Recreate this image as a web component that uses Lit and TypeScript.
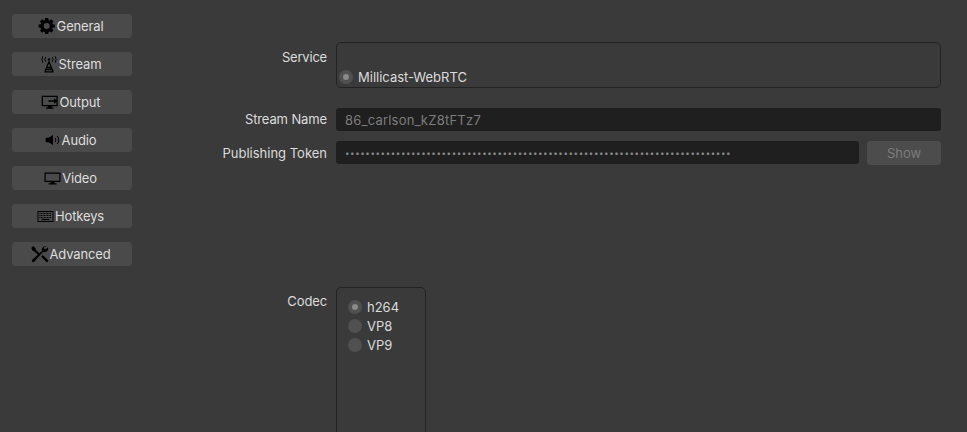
import { LitElement, html, css, svg } from "lit";
import { customElement } from "lit/decorators.js";

function gearPath(): string {
  const cx = 8.7, cy = 9, pts: string[] = [];
  const n = 8;
  for (let i = 0; i < n; i++) {
    const a = (i / n) * Math.PI * 2 - Math.PI / 2;
    const w = 0.24, r1 = 8.2, r0 = 6.3;
    const p = (r: number, t: number) =>
      `${(cx + r * Math.cos(t)).toFixed(2)} ${(cy + r * Math.sin(t)).toFixed(2)}`;
    pts.push(p(r0, a - w - 0.06), p(r1, a - w + 0.05), p(r1, a + w - 0.05), p(r0, a + w + 0.06));
  }
  return `M${pts.join("L")}Z M${cx - 3} ${cy}a3 3 0 1 0 6 0a3 3 0 1 0-6 0Z`;
}

const icons: Record<string, any> = {
  gear: svg`<svg class="ic" width="18" height="18" viewBox="0 0 18 18"><path fill="#000" fill-rule="evenodd" d="${gearPath()}"/></svg>`,
  antenna: svg`<svg class="ic" width="18" height="18" viewBox="0 0 18 18" fill="none" stroke="#000"><circle cx="9" cy="4.500" r="1.200" fill="#000" stroke="none"/><path stroke-width="1" d="M5.700 2.200a4 4 0 0 0 0 4.600M12.300 2.200a4 4 0 0 1 0 4.600M2.800 1.300a6.500 6.500 0 0 0 0 6.400M15.200 1.300a6.500 6.500 0 0 1 0 6.400"/><path stroke-width="1.300" d="M9 6.500 5 16.600M9 6.500l4 10.100M6.800 12.500h4.400M6 14.500h6M4.400 16.800h9.200"/></svg>`,
  output: svg`<svg class="ic" width="18" height="18" viewBox="0 0 18 18"><path fill="#000" fill-rule="evenodd" d="M.7 2.800h16v10.500H10.700v1.200h1.800v1.200H5v-1.200h1.800v-1.200H.7zM2 4.100v8h13.400v-8z"/><path fill="#000" d="M7.500 7.300h5.500V5.200l3.700 2.800-3.700 2.800V8.700H7.500z"/></svg>`,
  audio: svg`<svg class="ic" width="16" height="16" viewBox="0 0 16 16"><path fill="#000" d="M.7 5.800h2.800L8 3v10L3.500 10.200H.7z"/><path fill="none" stroke="#000" stroke-width="1" d="M10 5.800a3.400 3.400 0 0 1 0 4.400M12.200 4a6 6 0 0 1 0 8"/></svg>`,
  video: svg`<svg class="ic" width="17" height="17" viewBox="0 0 17 17"><path fill="#000" fill-rule="evenodd" d="M.5 2.500h16v9.500H10.500v1.300h2v1.200h-8v-1.200h2V12H.5zm1.200 1.200v7.100h13.600V3.700z"/></svg>`,
  keys: svg`<svg class="ic" width="17" height="17" viewBox="0 0 17 17"><path fill="#000" fill-rule="evenodd" d="M.5 3h16v11H.5zm1 1v9h14V4z"/><path stroke="#000" stroke-width="1.100" stroke-dasharray="1 .5" fill="none" d="M2.500 5.500h12M2.500 7.500h12M2.500 9.500h12"/><path stroke="#000" stroke-width="1.200" d="M4.500 11.500h8"/></svg>`,
  tools: svg`<svg class="ic" width="18" height="18" viewBox="0 0 18 18"><path fill="#000" d="M2.300 1 4.500 3.200 5 5 8.300 8.300 6.800 9.800 3.500 6.500 1.800 6 0.300 3zM15.800 1.200a3.800 3.800 0 0 0-4.800 4.900L1.200 14.700a1.500 1.500 0 0 0 2.100 2.100L11.900 7a3.800 3.800 0 0 0 5-4.800L14.900 4.200l-1.700-.4-.4-1.700z"/><path fill="#000" d="M10.200 11.700l1.700-1.700 5 5a1.200 1.200 0 0 1-1.700 1.700z"/></svg>`,
};

const NAV = [
  ["gear", "General"],
  ["antenna", "Stream"],
  ["output", "Output"],
  ["audio", "Audio"],
  ["video", "Video"],
  ["keys", "Hotkeys"],
  ["tools", "Advanced"],
];

@customElement("app-root")
export class AppRoot extends LitElement {
  static styles = css`
    :host {
      display: flex;
      height: 432px;
      overflow: hidden;
      background: #3a3a3a;
      color: #dcdcdc;
      font-family: Inter, "Liberation Sans", sans-serif;
      font-size: 13px;
    }
    .side {
      width: 120px;
      padding: 14px 0 0 12px;
      display: flex;
      flex-direction: column;
      gap: 14px;
      flex: none;
    }
    .nav {
      height: 24px;
      border-radius: 3px;
      background: #4a4a4a;
      display: flex;
      align-items: center;
      justify-content: center;
      gap: 1px;
      padding-right: 3px;
      box-sizing: border-box;
      color: #dedede;
      letter-spacing: -0.15px;
    }
    .ic { flex: none; }
    .main {
      flex: none;
      width: 809px;
      padding-top: 42px;
      display: grid;
      grid-template-columns: 195px 1fr;
      column-gap: 9px;
      align-content: start;
    }
    .lab {
      text-align: right;
      line-height: 15px;
      padding-top: 4px;
      color: #dcdcdc;
      letter-spacing: -0.12px;
    }
    .lab.l-service { padding-top: 8px; letter-spacing: -0.2px; }
    .lab.l-token { padding-top: 5px; letter-spacing: 0; }
    .lab.l-codec { padding-top: 7px; }
    .box {
      border: 1px solid #232323;
      border-radius: 5px;
      box-sizing: border-box;
    }
    .service {
      height: 46px;
      display: flex;
      align-items: flex-end;
      padding: 0 0 1px 2px;
      margin-bottom: 20px;
    }
    .radio {
      display: flex;
      align-items: center;
      gap: 5px;
      height: 19px;
    }
    .dot {
      width: 14px;
      height: 14px;
      border-radius: 50%;
      background: #505050;
      display: flex;
      align-items: center;
      justify-content: center;
    }
    .dot.on::after {
      content: "";
      width: 6px;
      height: 6px;
      border-radius: 50%;
      background: #8a8a8a;
    }
    .input {
      height: 23px;
      background: #1f1f1f;
      border-radius: 3px;
      display: flex;
      align-items: center;
      padding-left: 9px;
      box-sizing: border-box;
      color: #7d7d7d;
      flex: 1;
    }
    .name {
      margin-bottom: 10px;
      letter-spacing: 0.25px;
      font-kerning: none;
    }
    .tokrow {
      display: flex;
      gap: 8px;
      margin-bottom: 122px;
    }
    .dots {
      font-size: 8px;
      letter-spacing: 0.58px;
      color: #8a8a8a;
    }
    .show {
      width: 74px;
      height: 24px;
      border-radius: 3px;
      background: #4c4c4c;
      color: #7c7c7c;
      display: flex;
      align-items: center;
      justify-content: center;
    }
    .codec {
      width: 90px;
      height: 200px;
      padding: 9px 0 0 11px;
      display: flex;
      flex-direction: column;
    }
  `;

  render() {
    return html`
      <div class="side">
        ${NAV.map(([i, t]) => html`<div class="nav">${icons[i]}<span>${t}</span></div>`)}
      </div>
      <div class="main">
        <div class="lab l-service">Service</div>
        <div class="box service">
          <div class="radio"><span class="dot on"></span><span>Millicast-WebRTC</span></div>
        </div>
        <div class="lab">Stream Name</div>
        <div class="input name">86_carlson_kZ8tFTz7</div>
        <div class="lab l-token">Publishing Token</div>
        <div class="tokrow">
          <div class="input dots">${"•".repeat(76)}</div>
          <div class="show">Show</div>
        </div>
        <div class="lab l-codec">Codec</div>
        <div class="box codec">
          ${["h264", "VP8", "VP9"].map(
            (c, i) => html`<div class="radio"><span class="dot ${i === 0 ? "on" : ""}"></span><span>${c}</span></div>`
          )}
        </div>
      </div>
    `;
  }
}
